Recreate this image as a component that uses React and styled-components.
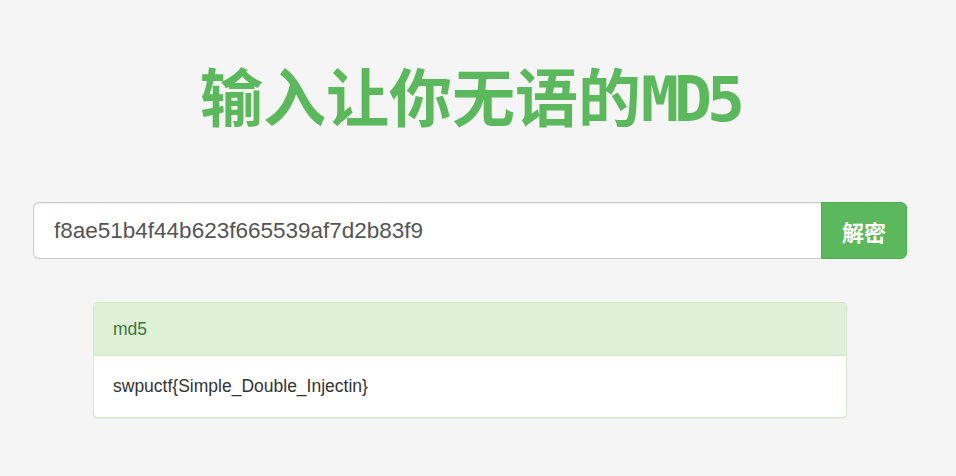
import React from "react";
import styled, { createGlobalStyle } from "styled-components";

const GlobalStyle = createGlobalStyle`
  html, body {
    margin: 0;
    padding: 0;
    background: #f5f5f5;
    font-family: "Liberation Sans", Arial, "Noto Sans CJK SC", sans-serif;
    color: #333;
  }
`;

const Page = styled.div`
  width: 940px;
  height: 476px;
  display: flex;
  flex-direction: column;
  align-items: center;
`;

const Title = styled.h1`
  margin: 53px 0 0;
  height: 82px;
  line-height: 82px;
  font-family: "Noto Sans CJK SC", sans-serif;
  font-weight: 700;
  font-size: 63px;
  color: #5cb85c;
  white-space: nowrap;
`;

const Latin = styled.span`
  font-family: "DejaVu Sans Mono", monospace;
  font-weight: 700;
  letter-spacing: -5px;
`;

const SearchRow = styled.form`
  margin-top: 67px;
  width: 874px;
  display: flex;
`;

const HashInput = styled.input`
  flex: 1;
  height: 57px;
  box-sizing: border-box;
  padding: 0 20px;
  border: 1px solid #ccc;
  border-right: none;
  border-radius: 6px 0 0 6px;
  background: #fff;
  font-family: "Liberation Sans", Arial, sans-serif;
  font-size: 22.5px;
  color: #555;
  box-shadow: inset 0 1px 1px rgba(0, 0, 0, 0.075);
  outline: none;
`;

const DecryptButton = styled.button`
  width: 86px;
  height: 57px;
  border: 1px solid #4cae4c;
  border-radius: 0 6px 6px 0;
  background: #5cb85c;
  color: #fff;
  font-family: "Noto Sans CJK SC", sans-serif;
  font-weight: 700;
  font-size: 22px;
  cursor: pointer;
`;

const Panel = styled.div`
  margin-top: 43px;
  width: 754px;
  box-sizing: border-box;
  background: #fff;
  border: 1px solid #d6e9c6;
  border-radius: 4px;
  box-shadow: 0 1px 1px rgba(0, 0, 0, 0.05);
  overflow: hidden;
`;

const PanelHeading = styled.div`
  padding: 15px 19px;
  line-height: 22px;
  font-size: 17.5px;
  background: #dff0d8;
  color: #3c763d;
  border-bottom: 1px solid #d6e9c6;
`;

const PanelBody = styled.div`
  padding: 19px 19px 20px;
  line-height: 22px;
  font-size: 17.5px;
  color: #333;
`;

export default function App() {
  return (
    <>
      <GlobalStyle />
      <Page>
        <Title>
          输入让你无语的<Latin>MD5</Latin>
        </Title>
        <SearchRow onSubmit={(e) => e.preventDefault()}>
          <HashInput defaultValue="f8ae51b4f44b623f665539af7d2b83f9" />
          <DecryptButton type="submit">解密</DecryptButton>
        </SearchRow>
        <Panel>
          <PanelHeading>md5</PanelHeading>
          <PanelBody>swpuctf{"{"}Simple_Double_Injectin{"}"}</PanelBody>
        </Panel>
      </Page>
    </>
  );
}
